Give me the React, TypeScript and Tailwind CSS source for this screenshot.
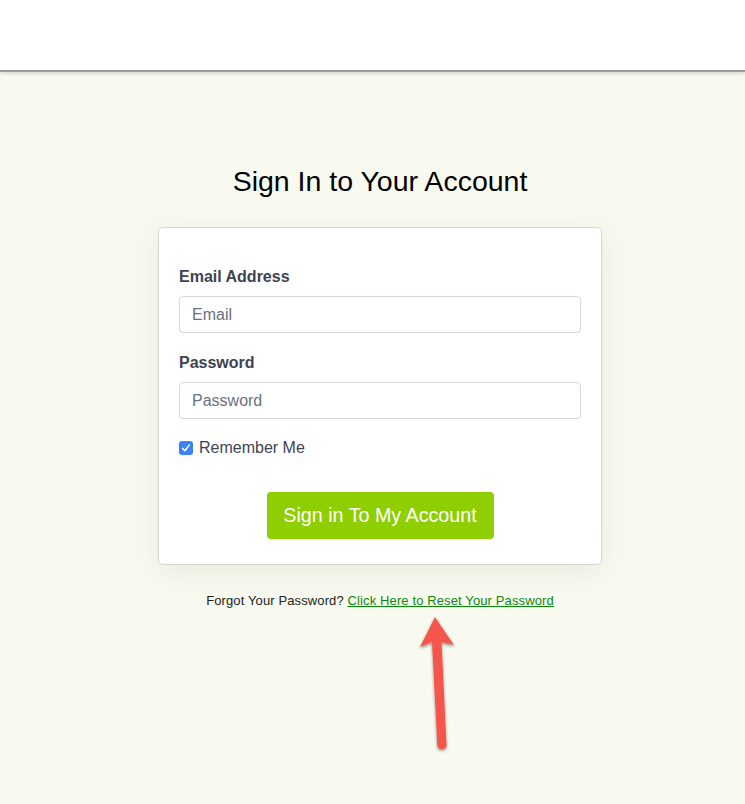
import { useState } from "react";

export default function App() {
  const [remember, setRemember] = useState(true);

  return (
    <div
      className="relative flex min-h-screen flex-col bg-[#f8faf0]"
      style={{ fontFamily: '"Liberation Sans", Arial, sans-serif' }}
    >
      {/* top bar */}
      <header className="h-[72px] border-b-2 border-[#9b9d98] bg-white shadow-[0_2px_3px_rgba(0,0,0,0.12)]" />

      <main className="flex flex-1 flex-col items-center pl-[15px]">
        <h1 className="mt-[92px] text-[28.5px] leading-[34px] text-black">Sign In to Your Account</h1>

        <form
          className="mt-[29px] flex w-[444px] flex-col rounded-[5px] border border-[#d3d8d6] bg-white px-[20px] pt-[37px] pb-[25px] shadow-[0_6px_28px_rgba(60,80,30,0.09)]"
          onSubmit={(e) => e.preventDefault()}
        >
          <label className="mb-[7px] text-[16px] font-bold leading-[24px] text-[#3d4451]">Email Address</label>
          <input
            type="email"
            placeholder="Email"
            className="h-[37px] rounded-[4px] border border-[#d3d7dd] px-[12px] pt-[1px] text-[16px] text-[#374151] placeholder:text-[#6b7280] outline-none"
          />

          <label className="mt-[18px] mb-[7px] text-[16px] font-bold leading-[24px] text-[#3d4451]">Password</label>
          <input
            type="password"
            placeholder="Password"
            className="h-[37px] rounded-[4px] border border-[#d3d7dd] px-[12px] pt-[1px] text-[16px] text-[#374151] placeholder:text-[#6b7280] outline-none"
          />

          <div
            className="mt-[17px] flex h-[24px] cursor-pointer items-center gap-[6px]"
            onClick={() => setRemember(!remember)}
          >
            <span
              className={`flex h-[14px] w-[14px] items-center justify-center rounded-[3px] ${
                remember ? "bg-[#3b82f6]" : "border border-[#9ca3af] bg-white"
              }`}
            >
              {remember && (
                <svg viewBox="0 0 14 14" className="h-[14px] w-[14px]">
                  <path d="M3.6 7.4 L5.9 9.8 L10.4 3.9" fill="none" stroke="white" strokeWidth="1.5" strokeLinecap="round" strokeLinejoin="round" />
                </svg>
              )}
            </span>
            <span className="text-[16px] leading-[24px] text-[#3d4451]">Remember Me</span>
          </div>

          <button
            type="submit"
            className="mt-[32px] h-[47px] w-[227px] self-center rounded-[4px] bg-[#8fce00] text-[19.7px] text-white"
          >
            Sign in To My Account
          </button>
        </form>

        <p className="mt-[26px] text-[13px] leading-[20px] tracking-[0.12px] text-[#222]">
          Forgot Your Password?{" "}
          <a href="#" className="text-[#0a8a0a] underline">
            Click Here to Reset Your Password
          </a>
        </p>
      </main>

      {/* annotation arrow */}
      <svg className="pointer-events-none absolute left-0 top-0" width="745" height="804">
        <defs>
          <filter id="sh" x="-50%" y="-20%" width="200%" height="140%">
            <feDropShadow dx="0" dy="1.5" stdDeviation="1.5" floodColor="#000" floodOpacity="0.45" />
          </filter>
        </defs>
        <path
          d="M435 617 L454 645 L441.5 642 L446.5 745 Q446.5 749 442 749 Q437.5 749 437.3 745 L432 642 L420 647 Z"
          fill="#f5564b"
          filter="url(#sh)"
        />
      </svg>
    </div>
  );
}
